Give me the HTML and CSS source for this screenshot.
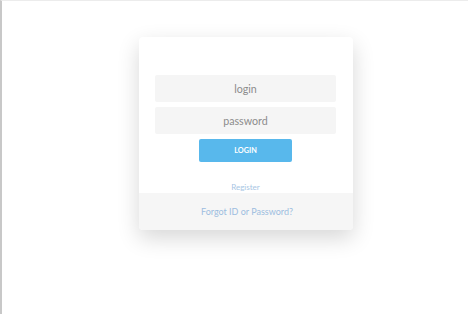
FILE: index.html
```html
<!DOCTYPE html>
<html>
<head>
<meta charset="utf-8">
<link rel="stylesheet" href="styles.css">
</head>
<body>
<div class="page">
  <div class="card">
    <div class="card-body">
      <div class="field">login</div>
      <div class="field">password</div>
      <div class="btn">LOGIN</div>
      <div class="register">Register</div>
    </div>
    <div class="card-footer">Forgot ID or Password?</div>
  </div>
</div>
</body>
</html>
```
FILE: styles.css
```css
html, body {
  margin: 0;
  padding: 0;
  background: #fff;
}
body {
  font-family: "Lato", "Open Sans", sans-serif;
}
.page {
  height: 313px;
  border-top: 1px solid #ececec;
  border-left: 2px solid #c8c8c8;
  display: flex;
  justify-content: flex-start;
}
.card {
  margin: 36px 0 0 137px;
  width: 214px;
  height: 193px;
  background: #fff;
  border-radius: 4px;
  box-shadow: 0 8px 22px rgba(0,0,0,0.16);
  display: flex;
  flex-direction: column;
  overflow: hidden;
}
.card-body {
  padding: 38px 17px 0 16px;
  display: flex;
  flex-direction: column;
  align-items: center;
  height: 156px;
  box-sizing: border-box;
}
.field {
  align-self: stretch;
  height: 27px;
  background: #f5f5f5;
  border-radius: 2px;
  color: #8c8c8c;
  font-size: 10.7px;
  display: flex;
  align-items: center;
  justify-content: center;
  margin-bottom: 5px;
}
.btn {
  width: 93px;
  height: 23px;
  background: #58b8ec;
  border-radius: 2px;
  color: #fff;
  font-size: 7.3px;
  font-weight: 700;
  display: flex;
  align-items: center;
  justify-content: center;
}
.register {
  margin-top: 20px;
  color: #a8c6e4;
  font-size: 8px;
}
.card-footer {
  flex: 1;
  background: #f6f6f6;
  color: #9dbde0;
  font-size: 9px;
  display: flex;
  align-items: center;
  justify-content: center;
  padding-left: 2px;
}
```
